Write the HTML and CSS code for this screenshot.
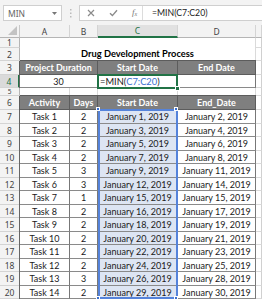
FILE: index.html
```html
<!DOCTYPE html>
<html>
<head>
<meta charset="utf-8">
<link rel="stylesheet" href="styles.css">
</head>
<body>
<div class="fbar">
  <div class="namebox"><span>MIN</span><svg width="5" height="3" viewBox="0 0 5 3"><path d="M0 0H5L2.5 3Z" fill="#777"/></svg></div>
  <div class="grip"><svg width="2" height="9" viewBox="0 0 2 9"><rect x="0" y="0" width="1.5" height="1.5" fill="#bbb"/><rect x="0" y="3.5" width="1.5" height="1.5" fill="#bbb"/><rect x="0" y="7" width="1.5" height="1.5" fill="#bbb"/></svg></div>
  <div class="fxbox">
    <div class="btns">
      <svg width="8" height="8" viewBox="0 0 8 8"><path d="M1 1L7 7M7 1L1 7" stroke="#8a8a8a" stroke-width="1.2"/></svg>
      <svg width="9" height="8" viewBox="0 0 9 8"><path d="M1 4.3L3.4 6.6L8 1.2" stroke="#8a8a8a" stroke-width="1.4" fill="none"/></svg>
      <span class="fx">f<sub>x</sub></span>
    </div>
    <div class="formula">=MIN(C7:C20)</div>
  </div>
</div>
<div class="sheet">
  <div class="corner"><svg width="9" height="9" viewBox="0 0 9 9"><path d="M9 0V9H0Z" fill="#c3c3c3"/></svg></div>
  <div class="ch">A</div><div class="ch">B</div><div class="ch on">C</div><div class="ch">D</div><div class="ch"></div>

  <div class="rh">1</div><div class="title">Drug Development Process</div><div class="e"></div>
  <div class="rh">2</div><div class="e"></div>

  <div class="rh">3</div><div class="th a span2">Project Duration</div><div class="th">Start Date</div><div class="th">End Date</div><div class="e"></div>
  <div class="rh on">4</div><div class="td a span2">30</div><div class="td left">=MIN(<span class="ref">C7:C20</span>)</div><div class="td"></div><div class="e"></div>
  <div class="rh short">5</div><div class="g5"></div><div class="g5"></div><div class="g5"></div><div class="g5"></div><div class="e"></div>

  <div class="rh">6</div><div class="th a">Activity</div><div class="th">Days</div><div class="th">Start Date</div><div class="th">End_Date</div><div class="e"></div>

  <div class="rh">7</div><div class="td a">Task 1</div><div class="td">2</div><div class="td c">January 1, 2019</div><div class="td">January 2, 2019</div><div class="e"></div>
  <div class="rh">8</div><div class="td a">Task 2</div><div class="td">2</div><div class="td c">January 3, 2019</div><div class="td">January 4, 2019</div><div class="e"></div>
  <div class="rh">9</div><div class="td a">Task 3</div><div class="td">2</div><div class="td c">January 5, 2019</div><div class="td">January 6, 2019</div><div class="e"></div>
  <div class="rh">10</div><div class="td a">Task 4</div><div class="td">2</div><div class="td c">January 7, 2019</div><div class="td">January 8, 2019</div><div class="e"></div>
  <div class="rh">11</div><div class="td a">Task 5</div><div class="td">3</div><div class="td c">January 9, 2019</div><div class="td">January 11, 2019</div><div class="e"></div>
  <div class="rh">12</div><div class="td a">Task 6</div><div class="td">3</div><div class="td c">January 12, 2019</div><div class="td">January 14, 2019</div><div class="e"></div>
  <div class="rh">13</div><div class="td a">Task 7</div><div class="td">1</div><div class="td c">January 15, 2019</div><div class="td">January 15, 2019</div><div class="e"></div>
  <div class="rh">14</div><div class="td a">Task 8</div><div class="td">2</div><div class="td c">January 16, 2019</div><div class="td">January 17, 2019</div><div class="e"></div>
  <div class="rh">15</div><div class="td a">Task 9</div><div class="td">2</div><div class="td c">January 18, 2019</div><div class="td">January 19, 2019</div><div class="e"></div>
  <div class="rh">16</div><div class="td a">Task 10</div><div class="td">2</div><div class="td c">January 20, 2019</div><div class="td">January 21, 2019</div><div class="e"></div>
  <div class="rh">17</div><div class="td a">Task 11</div><div class="td">2</div><div class="td c">January 22, 2019</div><div class="td">January 23, 2019</div><div class="e"></div>
  <div class="rh">18</div><div class="td a">Task 12</div><div class="td">2</div><div class="td c">January 24, 2019</div><div class="td">January 25, 2019</div><div class="e"></div>
  <div class="rh">19</div><div class="td a">Task 13</div><div class="td">3</div><div class="td c">January 26, 2019</div><div class="td">January 28, 2019</div><div class="e"></div>
  <div class="rh">20</div><div class="td a">Task 14</div><div class="td">2</div><div class="td c">January 29, 2019</div><div class="td">January 30, 2019</div><div class="e"></div>

  <div class="ov active"></div>
  <div class="ov fill"></div>
  <div class="ov range"></div>
  <div class="ov hdl h1"></div>
  <div class="ov hdl h2"></div>
  <div class="ov hdl h3"></div>
  <div class="ov hdl h4"></div>
</div>
</body>
</html>
```
FILE: styles.css
```css
body {
  margin: 0;
  width: 262px;
  height: 300px;
  overflow: hidden;
  background: #fff;
  font-family: Lato, "Liberation Sans", sans-serif;
  color: #111;
}

.fbar {
  height: 25px;
  box-sizing: border-box;
  background: #f3f3f3;
  display: flex;
  align-items: flex-start;
  padding: 5px 0 0 3px;
}

.namebox {
  width: 59px;
  height: 16px;
  box-sizing: border-box;
  background: #fff;
  border: 1px solid #cfcfcf;
  display: flex;
  align-items: center;
  justify-content: space-between;
  padding: 0 4px 0 4px;
  font: 8.5px "Noto Sans", sans-serif;
  color: #666;
}

.grip {
  width: 17px;
  height: 16px;
  display: flex;
  align-items: center;
  justify-content: center;
}

.fxbox {
  flex: 1;
  height: 16px;
  box-sizing: border-box;
  display: flex;
  background: #fff;
  border: 1px solid #cfcfcf;
  border-right: none;
}

.btns {
  width: 63px;
  box-sizing: border-box;
  display: flex;
  align-items: center;
  gap: 14px;
  padding-left: 7px;
  border-right: 1px solid #dcdcdc;
}

.fx {
  font: italic 9px "Liberation Serif", serif;
  color: #777;
  line-height: 14px;
}

.fx sub {
  font-size: 6px;
  vertical-align: -1px;
}

.formula {
  padding-left: 9px;
  font-size: 8.7px;
  line-height: 14px;
  color: #222;
}

.sheet {
  position: relative;
  display: grid;
  grid-template-columns: 20px 50px 28px 80px 78px 6px;
  grid-template-rows: 13px 10px 13px 14px 13px 8px 14px 14px 13px 14px 13px 14px 13px 14px 13px 14px 13px 14px 13px 14px 13px 2px;
  font-size: 9px;
}

.sheet > div {
  box-sizing: border-box;
  display: flex;
  align-items: center;
  justify-content: center;
  overflow: hidden;
  white-space: nowrap;
  border-right: 1px solid #dadada;
  border-bottom: 1px solid #dadada;
  background: #fff;
}

.sheet > .corner {
  background: #f3f3f3;
  border-right-color: #c8c8c8;
  border-bottom-color: #b5b5b5;
  align-items: flex-end;
  justify-content: flex-end;
  padding: 0 2px 2px 0;
}

.sheet > .ch {
  background: #f3f3f3;
  border-right-color: #d4d4d4;
  border-bottom-color: #b5b5b5;
  color: #444;
  font: 8.5px "Noto Sans", sans-serif;
}

.sheet > .ch.on {
  background: #e1e1e1;
  color: #217346;
  border-bottom: 2px solid #217346;
}

.sheet > .rh {
  background: #f3f3f3;
  border-right-color: #b5b5b5;
  border-bottom-color: #d4d4d4;
  color: #444;
  font: 8.5px/9px "Noto Sans", sans-serif;
}

.sheet > .rh.on {
  background: #dadada;
  color: #217346;
  border-right: 2px solid #217346;
}

.sheet > .rh.short {
  line-height: 7px;
  font-size: 6.5px;
}

.sheet > .title {
  grid-column: span 4;
  grid-row: span 2;
  font-weight: bold;
  font-size: 9.3px;
  align-items: flex-end;
  padding-bottom: 1px;
  color: #000;
  border-bottom-color: #6f6f6f;
}

.sheet > .span2 {
  grid-column: span 2;
}

.sheet > .th {
  background: #7f7f7f;
  color: #fff;
  font-weight: bold;
  border-right-color: #5c5c5c;
  border-bottom-color: #5c5c5c;
  box-shadow: 0 -1px 0 #5c5c5c;
}

.sheet > .td {
  color: #1a1a1a;
  border-right-color: #777;
  border-bottom-color: #8a8a8a;
}

.sheet > .a {
  box-shadow: -1px 0 0 #666;
}

.sheet > .th.a {
  box-shadow: -1px 0 0 #5c5c5c, 0 -1px 0 #5c5c5c;
}

.sheet > .left {
  justify-content: flex-start;
  padding-left: 2px;
  font-size: 9.3px;
}

.ref {
  color: #3a6fd0;
}

.sheet > .g5 {
  border-bottom-color: #5c5c5c;
}

.sheet > .c {
  background: #dde5f3;
}

.sheet > .e {
  border-right-color: #d0d0d0;
}

.sheet > .ov {
  position: absolute;
  background: transparent;
  border: none;
}

.sheet > .active {
  left: 97px;
  top: 49px;
  width: 81px;
  height: 15px;
  border: 2px solid #217346;
}

.sheet > .fill {
  left: 175px;
  top: 61px;
  width: 5px;
  height: 5px;
  background: #217346;
  border: 1px solid #fff;
}

.sheet > .range {
  left: 98px;
  top: 84px;
  width: 80px;
  height: 190px;
  border: 2px solid #5583da;
}

.sheet > .hdl {
  width: 4px;
  height: 4px;
  background: #3a6fd0;
  border: 1px solid #fff;
}

.sheet > .h1 { left: 96px; top: 82px; }
.sheet > .h2 { left: 174px; top: 82px; }
.sheet > .h3 { left: 96px; top: 271px; }
.sheet > .h4 { left: 174px; top: 271px; }
```
